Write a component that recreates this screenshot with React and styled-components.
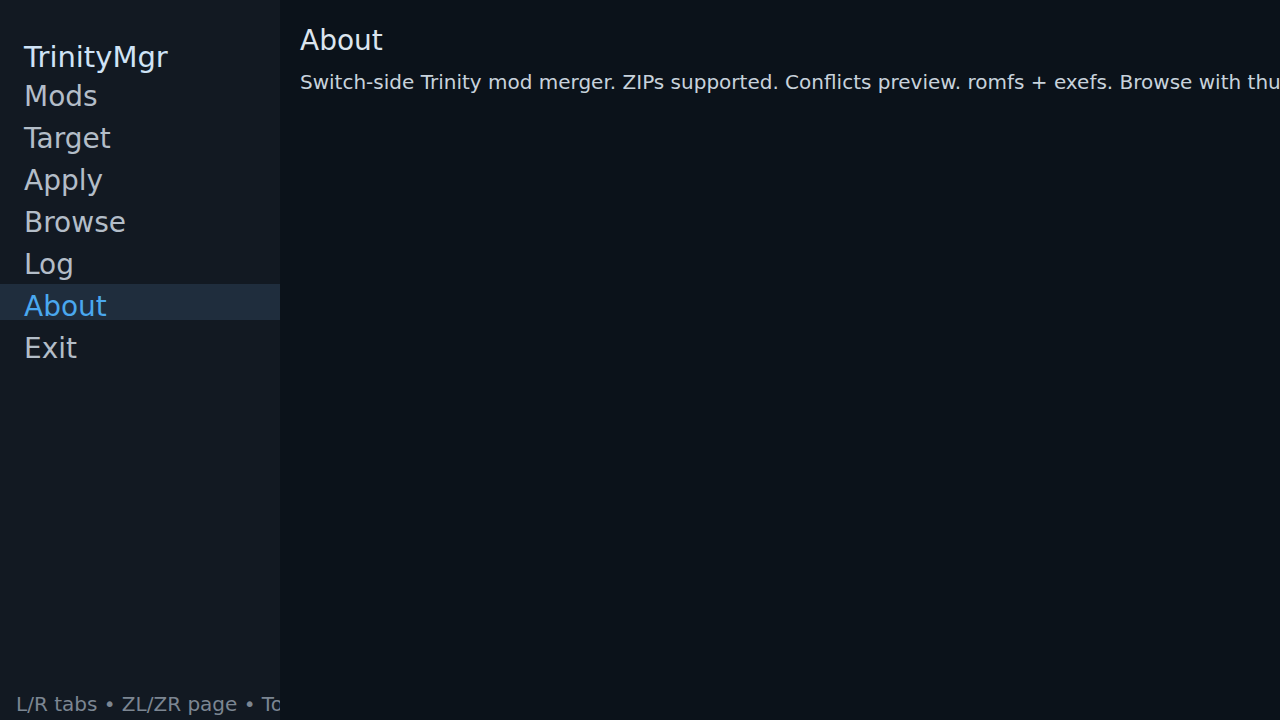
import React from 'react';
import styled, { createGlobalStyle } from 'styled-components';

const GlobalStyle = createGlobalStyle`
  html, body {
    margin: 0;
    padding: 0;
    background: #0b121a;
  }
  body {
    font-family: "DejaVu Sans", "Liberation Sans", sans-serif;
  }
`;

const Shell = styled.div`
  display: flex;
  width: 1280px;
  height: 720px;
  overflow: hidden;
  background: #0b121a;
`;

const Sidebar = styled.aside`
  display: flex;
  flex-direction: column;
  flex: 0 0 280px;
  width: 280px;
  padding-top: 34px;
  background: #121922;
  overflow: hidden;
`;

const Brand = styled.div`
  height: 40px;
  line-height: 46px;
  padding-left: 24px;
  font-size: 29px;
  color: #cfe3f6;
  white-space: nowrap;
`;

const NavItem = styled.div`
  height: 42px;
  line-height: 46px;
  padding-left: 24px;
  font-size: 28px;
  white-space: nowrap;
  color: ${(props) => (props.active ? '#4aa8ef' : '#b3bdc8')};
  background: ${(props) =>
    props.active
      ? 'linear-gradient(#1f2d3d, #1f2d3d) top left / 100% 36px no-repeat'
      : 'none'};
`;

const Hint = styled.div`
  margin-top: auto;
  padding: 0 0 5px 16px;
  font-size: 20px;
  line-height: 22px;
  color: #7c8692;
  white-space: nowrap;
`;

const Main = styled.main`
  flex: 1;
  min-width: 0;
  padding: 19px 0 0 20px;
  overflow: hidden;
`;

const Heading = styled.h1`
  margin: 0;
  font-size: 28px;
  font-weight: normal;
  line-height: 44px;
  color: #dce5ee;
`;

const Blurb = styled.p`
  margin: 5px 0 0;
  font-size: 20px;
  line-height: 28px;
  color: #c8d2dc;
  white-space: nowrap;
`;

const tabs = ['Mods', 'Target', 'Apply', 'Browse', 'Log', 'About', 'Exit'];

export default function App() {
  const current = 'About';

  return (
    <>
      <GlobalStyle />
      <Shell>
        <Sidebar>
          <Brand>TrinityMgr</Brand>
          {tabs.map((tab) => (
            <NavItem key={tab} active={tab === current}>
              {tab}
            </NavItem>
          ))}
          <Hint>L/R tabs • ZL/ZR page • Touch to select • + to exit</Hint>
        </Sidebar>
        <Main>
          <Heading>About</Heading>
          <Blurb>
            Switch-side Trinity mod merger. ZIPs supported. Conflicts preview. romfs + exefs. Browse with thumbnails.
          </Blurb>
        </Main>
      </Shell>
    </>
  );
}
